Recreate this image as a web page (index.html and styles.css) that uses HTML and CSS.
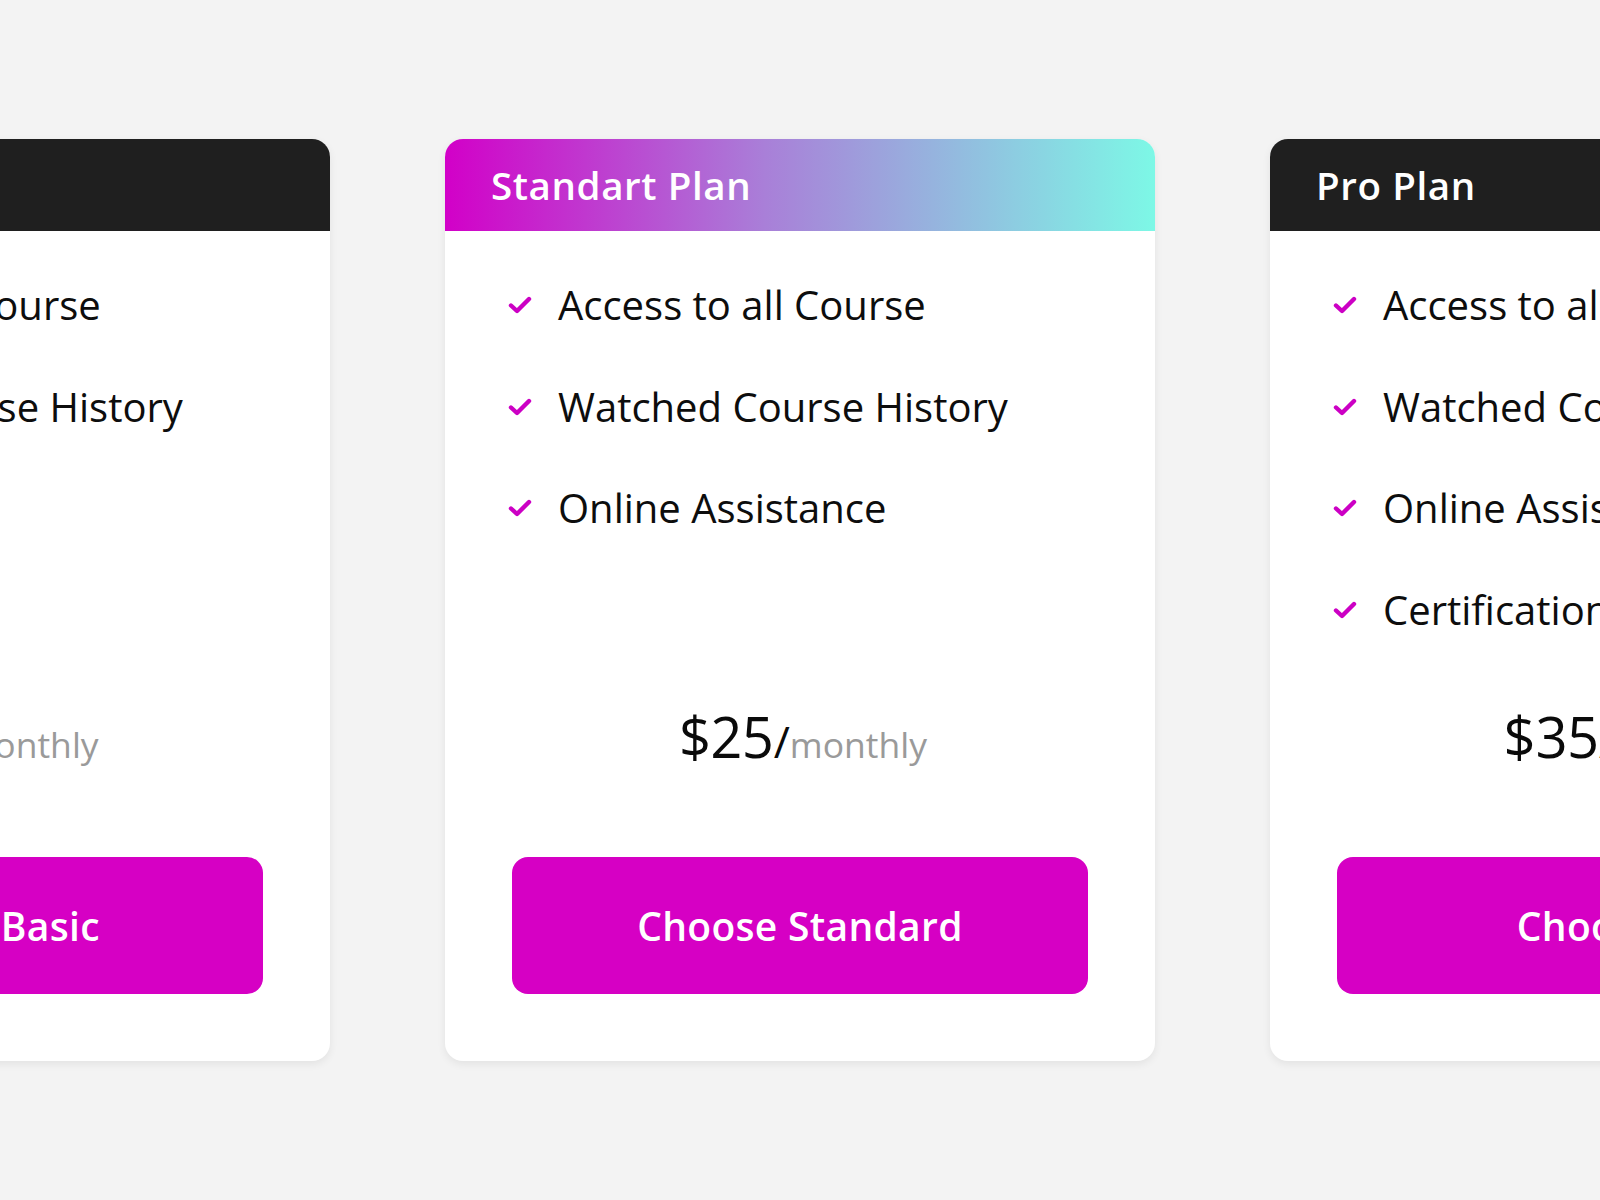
FILE: index.html
```html
<!DOCTYPE html>
<html lang="en">
<head>
<meta charset="utf-8">
<title>Pricing Plans</title>
<link rel="stylesheet" href="styles.css">
</head>
<body>
<main class="plans">
  <section class="card">
    <header class="card-head dark"><h2 class="card-title">Basic Plan</h2></header>
    <div class="card-body">
      <ul class="features">
        <li class="feature"><svg class="check" viewBox="0 0 24 18"><path d="M3 9.5 L9 15 L21 3"/></svg><span>Access to all Course</span></li>
        <li class="feature"><svg class="check" viewBox="0 0 24 18"><path d="M3 9.5 L9 15 L21 3"/></svg><span>Watched Course History</span></li>
      </ul>
      <p class="price"><span class="amount">$15</span><span class="slash">/</span><span class="period">monthly</span></p>
      <button class="choose">Choose Basic</button>
    </div>
  </section>

  <section class="card">
    <header class="card-head gradient"><h2 class="card-title">Standart Plan</h2></header>
    <div class="card-body">
      <ul class="features">
        <li class="feature"><svg class="check" viewBox="0 0 24 18"><path d="M3 9.5 L9 15 L21 3"/></svg><span>Access to all Course</span></li>
        <li class="feature"><svg class="check" viewBox="0 0 24 18"><path d="M3 9.5 L9 15 L21 3"/></svg><span>Watched Course History</span></li>
        <li class="feature"><svg class="check" viewBox="0 0 24 18"><path d="M3 9.5 L9 15 L21 3"/></svg><span>Online Assistance</span></li>
      </ul>
      <p class="price"><span class="amount">$25</span><span class="slash">/</span><span class="period">monthly</span></p>
      <button class="choose">Choose Standard</button>
    </div>
  </section>

  <section class="card">
    <header class="card-head dark"><h2 class="card-title">Pro Plan</h2></header>
    <div class="card-body">
      <ul class="features">
        <li class="feature"><svg class="check" viewBox="0 0 24 18"><path d="M3 9.5 L9 15 L21 3"/></svg><span>Access to all Course</span></li>
        <li class="feature"><svg class="check" viewBox="0 0 24 18"><path d="M3 9.5 L9 15 L21 3"/></svg><span>Watched Course History</span></li>
        <li class="feature"><svg class="check" viewBox="0 0 24 18"><path d="M3 9.5 L9 15 L21 3"/></svg><span>Online Assistance</span></li>
        <li class="feature"><svg class="check" viewBox="0 0 24 18"><path d="M3 9.5 L9 15 L21 3"/></svg><span>Certification</span></li>
      </ul>
      <p class="price"><span class="amount">$35</span><span class="slash">/</span><span class="period">monthly</span></p>
      <button class="choose">Choose Pro</button>
    </div>
  </section>
</main>
</body>
</html>
```

FILE: styles.css
```css
* {
  box-sizing: border-box;
}

html, body {
  margin: 0;
  padding: 0;
  background: #f3f3f3;
}

body {
  width: 1600px;
  height: 1200px;
  overflow: hidden;
  font-family: "Open Sans", "Liberation Sans", sans-serif;
  color: #111;
}

.plans {
  display: flex;
  justify-content: center;
  gap: 115px;
  padding-top: 139px;
}

.card {
  flex: 0 0 710px;
  height: 922px;
  background: #fff;
  border-radius: 18px;
  overflow: hidden;
  display: flex;
  flex-direction: column;
  box-shadow: 0 3px 8px rgba(0, 0, 0, 0.07);
}

.card-head {
  height: 92px;
  display: flex;
  align-items: center;
  padding-left: 46px;
}

.card-head.dark {
  background: #1f1f1f;
}

.card-head.gradient {
  background: linear-gradient(90deg, #d200c8 0%, #a97fd8 45%, #7df8e6 100%);
}

.card-title {
  margin: 0;
  color: #fff;
  font-size: 38.5px;
  font-weight: 600;
  letter-spacing: 0.6px;
}

.card-body {
  flex: 1;
  display: flex;
  flex-direction: column;
  padding: 50px 67px 67px 63px;
}

.features {
  list-style: none;
  margin: 0;
  padding: 0;
  display: flex;
  flex-direction: column;
  gap: 53.5px;
}

.feature {
  display: flex;
  align-items: center;
  gap: 26px;
  height: 48px;
  font-size: 40px;
  line-height: 48px;
  color: #0d0d0d;
  white-space: nowrap;
}

.check {
  flex: 0 0 24px;
  width: 24px;
  height: 18px;
  fill: none;
  stroke: #cc00c4;
  stroke-width: 4.4;
  stroke-linecap: round;
  stroke-linejoin: round;
}

.price {
  margin: auto 0 0;
  padding-left: 10px;
  text-align: center;
  line-height: 68px;
  white-space: nowrap;
  font-variant-numeric: proportional-nums;
}

.amount {
  font-size: 56px;
  color: #0a0a0a;
}

.slash {
  font-size: 44px;
  line-height: 1;
  color: #0a0a0a;
}

.period {
  font-size: 35.5px;
  line-height: 1;
  color: #9a9a9a;
}

.choose {
  margin-top: 71px;
  height: 137px;
  border: none;
  border-radius: 16px;
  background: #d600c4;
  color: #fff;
  font-family: "Open Sans", "Liberation Sans", sans-serif;
  font-size: 39px;
  font-weight: 600;
  letter-spacing: 0.3px;
  padding: 0;
  margin-left: 4px;
}
```
